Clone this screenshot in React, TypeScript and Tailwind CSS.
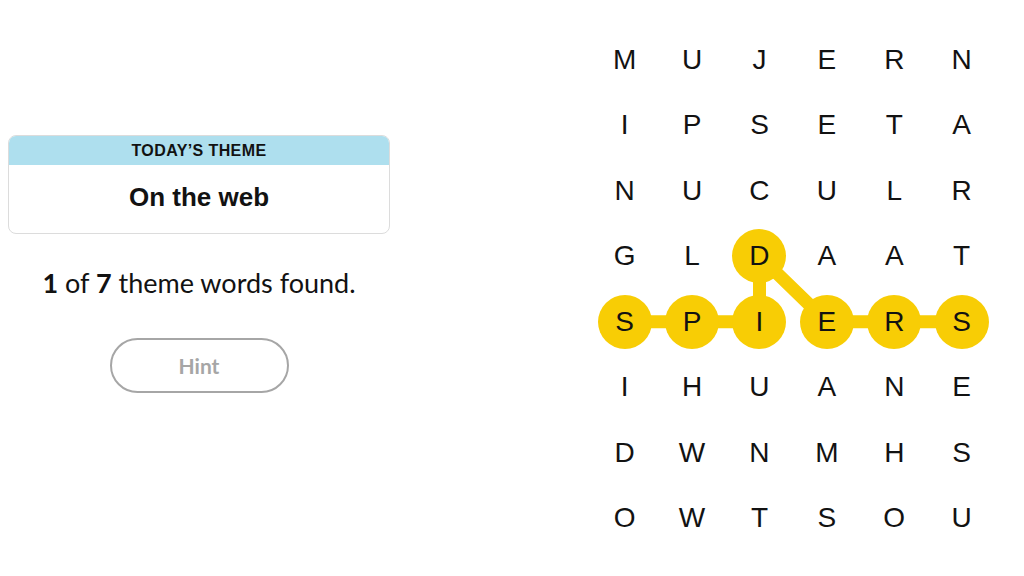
import React from "react";

const GRID = [
  "MUJERN",
  "IPSETA",
  "NUCULR",
  "GLDAAT",
  "SPIERS",
  "IHUANE",
  "DWNMHS",
  "OWTSOU",
];

const CW = 67.4;
const RH = 65.5;

const PATH: [number, number][] = [
  [4, 0],
  [4, 1],
  [4, 2],
  [3, 2],
  [4, 3],
  [4, 4],
  [4, 5],
];

const selected = new Set(PATH.map(([r, c]) => `${r}-${c}`));

export default function App() {
  const points = PATH.map(([r, c]) => `${c * CW + CW / 2},${r * RH + RH / 2}`).join(" ");
  return (
    <div className="flex w-[1024px] h-[576px] bg-white overflow-hidden">
      <div className="w-[398px] shrink-0 pt-[135px] px-[8px] flex flex-col items-center">
        <div className="w-[382px] rounded-[8px] border border-[#dcdcdc] overflow-hidden">
          <div className="h-[29px] bg-[#aedfee] flex items-center justify-center text-[16px] font-bold tracking-[0.4px] text-[#121212] [font-family:'Liberation_Sans',Arial,sans-serif]">
            TODAY’S THEME
          </div>
          <div className="h-[68px] flex items-center justify-center pb-[4px] text-[26px] font-bold text-[#121212] [font-family:'Liberation_Sans',Arial,sans-serif]">
            On the web
          </div>
        </div>
        <div className="mt-[32px] text-[27px] text-[#121212] [font-family:Lato,sans-serif] leading-[34px]">
          <span className="font-bold">1</span> of <span className="font-bold">7</span> theme words found.
        </div>
        <button className="mt-[38px] w-[179px] h-[55px] rounded-full border-2 border-[#a6a6a6] text-[#a6a6a6] text-[21px] font-bold [font-family:Lato,sans-serif] flex items-center justify-center">
          Hint
        </button>
      </div>
      <div className="ml-[193px] mt-[27px] relative">
        <svg
          className="absolute left-0 top-0"
          width={CW * 6}
          height={RH * 8}
        >
          <polyline
            points={points}
            fill="none"
            stroke="#f8cd05"
            strokeWidth={13}
            strokeLinejoin="round"
          />
        </svg>
        <div className="relative flex flex-col">
          {GRID.map((row, r) => (
            <div key={r} className="flex">
              {row.split("").map((ch, c) => {
                const sel = selected.has(`${r}-${c}`);
                return (
                  <div key={c} className="w-[67.4px] h-[65.5px] flex items-center justify-center">
                    <div
                      className={`w-[54px] h-[54px] rounded-full flex items-center justify-center text-[28px] text-[#121212] [font-family:'Liberation_Sans',Arial,sans-serif] ${sel ? "bg-[#f8cd05]" : ""}`}
                    >
                      {ch}
                    </div>
                  </div>
                );
              })}
            </div>
          ))}
        </div>
      </div>
    </div>
  );
}
